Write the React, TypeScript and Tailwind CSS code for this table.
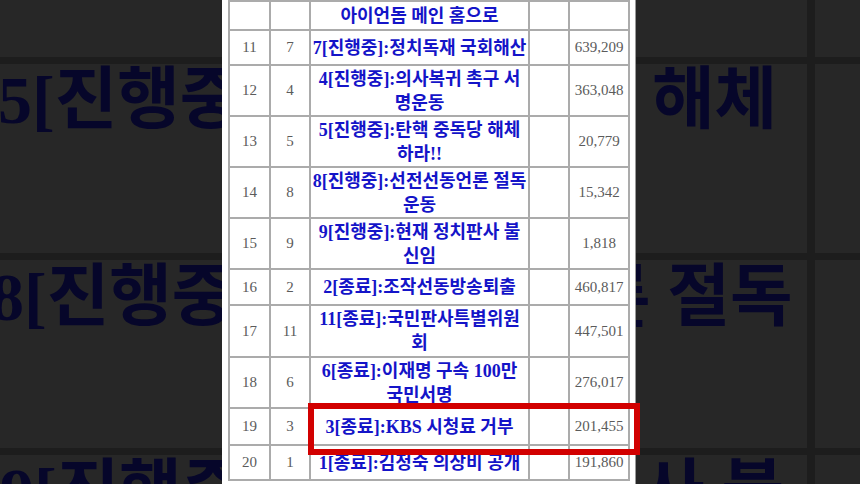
type Row = { no: string; rank: string; title: string[]; count: string };

const rows: Row[] = [
  { no: "", rank: "", title: ["아이언돔 메인 홈으로"], count: "" },
  { no: "11", rank: "7", title: ["7[진행중]:정치독재 국회해산"], count: "639,209" },
  { no: "12", rank: "4", title: ["4[진행중]:의사복귀 촉구 서", "명운동"], count: "363,048" },
  { no: "13", rank: "5", title: ["5[진행중]:탄핵 중독당 해체", "하라!!"], count: "20,779" },
  { no: "14", rank: "8", title: ["8[진행중]:선전선동언론 절독", "운동"], count: "15,342" },
  { no: "15", rank: "9", title: ["9[진행중]:현재 정치판사 불", "신임"], count: "1,818" },
  { no: "16", rank: "2", title: ["2[종료]:조작선동방송퇴출"], count: "460,817" },
  { no: "17", rank: "11", title: ["11[종료]:국민판사특별위원", "회"], count: "447,501" },
  { no: "18", rank: "6", title: ["6[종료]:이재명 구속 100만", "국민서명"], count: "276,017" },
  { no: "19", rank: "3", title: ["3[종료]:KBS 시청료 거부"], count: "201,455" },
  { no: "20", rank: "1", title: ["1[종료]:김정숙 의상비 공개"], count: "191,860" },
];

const big =
  "absolute whitespace-nowrap text-[68px] leading-none font-bold text-[#06062a] font-['Liberation_Serif','Noto_Sans_CJK_KR',serif]";

// one band of the blown-up table: left part and right part around the panel
function BigRow({ left, leftX, right, rightX, top }: { left: string; leftX: number; right: string; rightX: number; top: number }) {
  return (
    <div className="flex bg-[#272727]">
      <div className="relative w-[222px] overflow-hidden">
        <span className={big} style={{ left: leftX, top }}>{left}</span>
      </div>
      <div className="relative ml-[414px] flex-1 overflow-hidden">
        <span className={big} style={{ left: rightX, top }}>{right}</span>
      </div>
    </div>
  );
}

function Backdrop() {
  return (
    <div className="absolute inset-0 grid grid-cols-[807px_45px] grid-rows-[57px_189px_188px_1fr] gap-x-[8px] gap-y-[7px] bg-[#1d1d1d]">
      <div className="bg-[#272727]" />
      <div className="bg-[#272727]" />
      <BigRow left="5[진행중" leftX={-2} right="해체" rightX={16} top={2} />
      <div className="bg-[#272727]" />
      <BigRow left="8[진행중" leftX={-10} right="론 절독" rightX={-48} top={3} />
      <div className="bg-[#272727]" />
      <BigRow left="9[진행중" leftX={0} right="사 불" rightX={6} top={3} />
      <div className="bg-[#272727]" />
    </div>
  );
}

export default function App() {
  const num = "bg-white flex items-center justify-center text-[15px] text-[#5b5b5b] font-['Liberation_Serif',serif]";
  return (
    <div className="relative w-[860px] h-[484px] overflow-hidden bg-[#272727]">
      <Backdrop />

      <div className="relative z-10 ml-[222px] w-[414px] h-full bg-white border-r border-[#9a9a9a]">
        <div className="ml-[6px] w-[402px] grid grid-cols-[39px_38px_217px_38px_58px] grid-rows-[27px_33px_49px_49px_49px_49px_34px_50px_49px_35px_33px] gap-[2px] p-[2px] bg-[#ababab]">
          {rows.map((r, i) => (
            <div key={i} className="contents">
              <div className={num}>{r.no}</div>
              <div className={num}>{r.rank}</div>
              <div className="bg-white flex flex-col items-center justify-center text-[18px] leading-[24px] font-bold text-[#1414c8] whitespace-nowrap font-['Liberation_Serif','Noto_Sans_CJK_KR',serif]">
                {r.title.map((t) => (
                  <span key={t}>{t}</span>
                ))}
              </div>
              <div className="bg-white" />
              <div className={num}>{r.count}</div>
            </div>
          ))}
        </div>
      </div>

      {/* highlight box */}
      <div className="absolute z-20 left-[308px] top-[403px] w-[332px] h-[52px] border-[6px] border-[#d20000]" />
    </div>
  );
}
